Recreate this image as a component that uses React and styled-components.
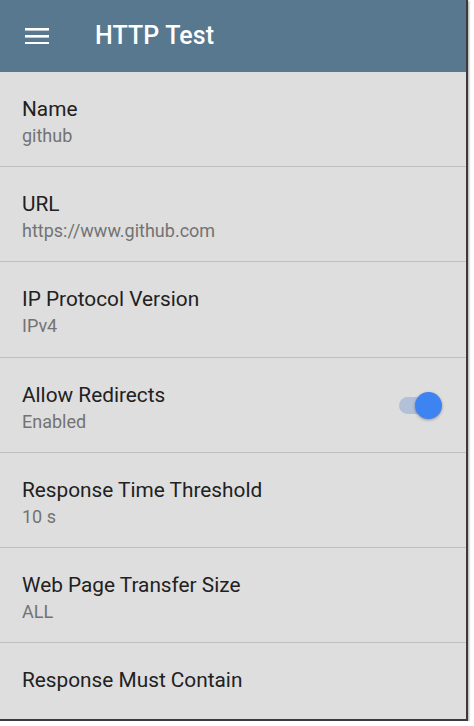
import React from "react";
import styled, { createGlobalStyle } from "styled-components";

const GlobalStyle = createGlobalStyle`
  html, body {
    margin: 0;
    padding: 0;
    background: #ffffff;
  }
  body {
    font-family: Roboto, "Noto Sans", "Liberation Sans", sans-serif;
  }
`;

const Frame = styled.div`
  width: 466px;
  height: 719px;
  overflow: hidden;
  background: #dedede;
  border-right: 2px solid #3a3a3a;
  border-bottom: 2px solid #3a3a3a;
  box-shadow: 1px 1px 2px rgba(0, 0, 0, 0.35);
  display: flex;
  flex-direction: column;
`;

const Toolbar = styled.header`
  height: 72px;
  flex-shrink: 0;
  background: #57788f;
  display: flex;
  align-items: center;
  padding-left: 25px;
  box-sizing: border-box;
`;

const MenuButton = styled.div`
  width: 24px;
  height: 18px;
  display: flex;
  margin-top: -2px;
`;

const Title = styled.h1`
  margin: 0 0 0 46px;
  color: #ffffff;
  font-size: 25px;
  font-weight: 500;
  letter-spacing: 0.1px;
  line-height: 30px;
`;

const List = styled.div`
  display: flex;
  flex-direction: column;
`;

const Row = styled.div`
  height: 94.2px;
  flex-shrink: 0;
  border-bottom: 1px solid #bfbfbf;
  box-sizing: content-box;
  display: flex;
  align-items: flex-start;
  justify-content: space-between;
  padding: 0 24px 0 22px;
`;

const Texts = styled.div`
  display: flex;
  flex-direction: column;
  padding-top: 25px;
`;

const Label = styled.div`
  font-size: 20.8px;
  line-height: 24px;
  color: #212121;
`;

const Value = styled.div`
  margin-top: 4px;
  font-size: 18px;
  line-height: 22px;
  color: #737373;
`;

const Switch = styled.div`
  align-self: center;
  position: relative;
  width: 43px;
  height: 27px;
  margin-top: 1px;
`;

const Track = styled.div`
  position: absolute;
  left: 0;
  top: 5px;
  width: 32px;
  height: 17px;
  border-radius: 9px;
  background: ${(p) => (p.on ? "#b2c0d8" : "#b9b9b9")};
`;

const Thumb = styled.div`
  position: absolute;
  top: 0;
  left: ${(p) => (p.on ? "16px" : "0")};
  width: 27px;
  height: 27px;
  border-radius: 50%;
  background: ${(p) => (p.on ? "#3d84f2" : "#f5f5f5")};
  box-shadow: 0 1px 3px rgba(0, 0, 0, 0.35);
`;

const settings = [
  { label: "Name", value: "github" },
  { label: "URL", value: "https://www.github.com" },
  { label: "IP Protocol Version", value: "IPv4" },
  { label: "Allow Redirects", value: "Enabled", toggle: true },
  { label: "Response Time Threshold", value: "10 s" },
  { label: "Web Page Transfer Size", value: "ALL" },
  { label: "Response Must Contain" },
];

const MenuIcon = () => (
  <svg width="24" height="18" viewBox="0 0 24 18">
    <rect x="0" y="2" width="24" height="2.6" fill="#fff" />
    <rect x="0" y="9" width="24" height="2.6" fill="#fff" />
    <rect x="0" y="16" width="24" height="2.6" fill="#fff" />
  </svg>
);

export default function App() {
  return (
    <>
      <GlobalStyle />
      <Frame>
        <Toolbar>
          <MenuButton>
            <MenuIcon />
          </MenuButton>
          <Title>HTTP Test</Title>
        </Toolbar>
        <List>
          {settings.map((s, i) => (
            <Row key={i}>
              <Texts>
                <Label>{s.label}</Label>
                {s.value && <Value>{s.value}</Value>}
              </Texts>
              {s.toggle && (
                <Switch>
                  <Track on />
                  <Thumb on />
                </Switch>
              )}
            </Row>
          ))}
        </List>
      </Frame>
    </>
  );
}
